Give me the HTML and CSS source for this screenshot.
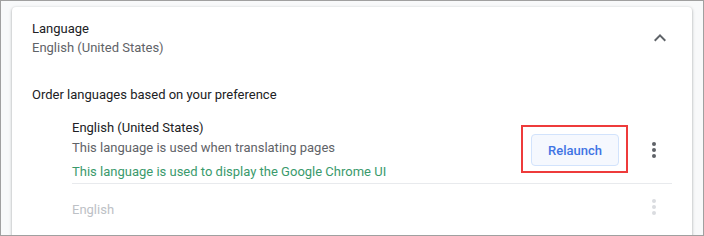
FILE: index.html
```html
<!DOCTYPE html>
<html>
<head>
<meta charset="utf-8">
<link rel="stylesheet" href="styles.css">
</head>
<body>
<div class="frame">
  <div class="card">
    <div class="header">
      <div class="header-text">
        <div class="title">Language</div>
        <div class="secondary">English (United States)</div>
      </div>
      <svg class="chevron" width="24" height="24" viewBox="0 0 24 24"><path d="M12 8l-6 6 1.41 1.41L12 10.83l4.59 4.58L18 14z" fill="#5f6368"/></svg>
    </div>
    <div class="order">Order languages based on your preference</div>
    <div class="list">
      <div class="item first">
        <div class="item-text">
          <div class="name">English (United States)</div>
          <div class="secondary">This language is used when translating pages</div>
          <div class="ui-lang">This language is used to display the Google Chrome UI</div>
        </div>
        <div class="btn-wrap">
          <button class="relaunch">Relaunch</button>
          <div class="highlight"></div>
        </div>
        <div class="kebab"><span></span><span></span><span></span></div>
      </div>
      <div class="item second">
        <div class="item-text">
          <div class="name disabled">English</div>
        </div>
        <div class="kebab light"><span></span><span></span><span></span></div>
      </div>
    </div>
  </div>
</div>
</body>
</html>
```
FILE: styles.css
```css
* { box-sizing: border-box; }
html, body { margin: 0; padding: 0; }
body {
  font-family: Roboto, "Liberation Sans", sans-serif;
  font-size: 13px;
  color: #202124;
}
.frame {
  width: 704px;
  height: 236px;
  border: 1px solid #a0a0a0;
  background: #f8f9fa;
  overflow: hidden;
  padding: 6px 0 0 11px;
}
.card {
  width: 680px;
  height: 260px;
  background: #fff;
  border-radius: 4px;
  box-shadow: 0 1px 2px rgba(60,64,67,.3), 0 1px 3px 1px rgba(60,64,67,.15);
  padding: 12px 20px 0 20px;
}
.header {
  display: flex;
  align-items: center;
  justify-content: space-between;
}
.title, .secondary, .name, .ui-lang, .order { line-height: 19px; }
.secondary { color: #5f6368; }
.chevron { display: block; }
.order { margin-top: 28px; line-height: 20px; }
.list { margin-top: 13px; padding-left: 40px; }
.item {
  display: flex;
  align-items: center;
}
.item.first {
  border-bottom: 1px solid #e8eaed;
  padding-bottom: 1px;
}
.item-text { flex: 1; }
.name { line-height: 20px; }
.item .secondary { line-height: 20px; }
.ui-lang { color: #3a9a6c; margin-top: 4px; line-height: 20px; }
.btn-wrap { position: relative; margin-right: 17px; }
.relaunch {
  display: block;
  height: 32px;
  width: 88px;
  border: 1px solid #d2e3fc;
  border-radius: 4px;
  background: #f5f8fe;
  color: #3f74e4;
  font-family: Roboto, "Liberation Sans", sans-serif;
  font-size: 13px;
  font-weight: 500;
  padding: 0;
}
.highlight {
  position: absolute;
  left: -10px;
  top: -9px;
  right: -9px;
  bottom: -7px;
  border: 2px solid #ee3b3b;
  pointer-events: none;
}
.kebab {
  width: 36px;
  height: 36px;
  display: flex;
  flex-direction: column;
  align-items: center;
  justify-content: center;
  gap: 2px;
}
.kebab span {
  width: 4px;
  height: 4px;
  border-radius: 50%;
  background: #5f6368;
}
.kebab.light span { background: #dadce0; }
.item.second { padding-top: 11px; }
.item.second .kebab { margin-top: -6px; }
.disabled { color: #bdc1c6; }
```
